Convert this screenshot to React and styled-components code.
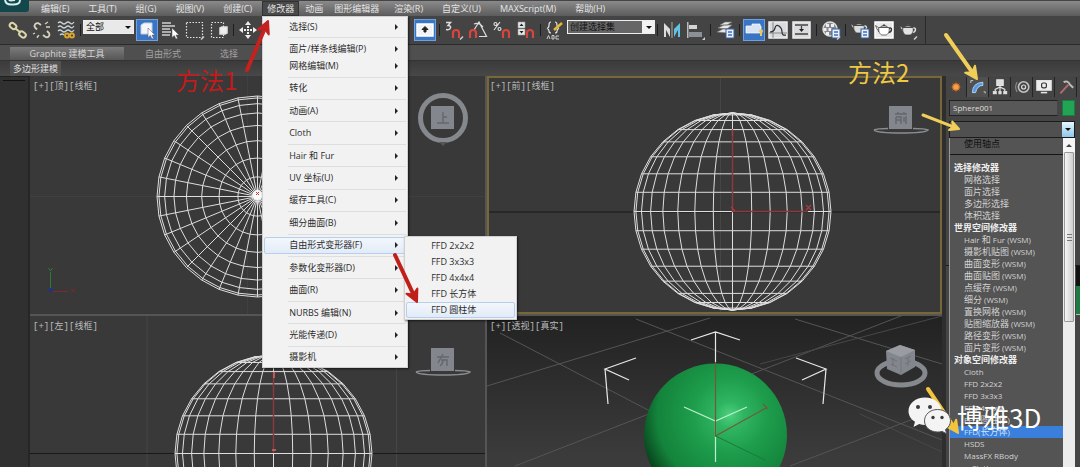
import React from "react";
import styled, { createGlobalStyle, css } from "styled-components";

const Global = createGlobalStyle`
  * { box-sizing: border-box; }
  body { margin: 0; background: #444; overflow: hidden; }
  button, input, select {
    font: inherit; color: inherit; margin: 0; padding: 0; border: 0;
    background: none; border-radius: 0; appearance: none; text-align: left;
  }
  ul { list-style: none; margin: 0; padding: 0; }
`;

const Shell = styled.div`
  position: relative;
  display: flex;
  flex-direction: column;
  height: 100vh;
  overflow: hidden;
  background: #444;
  color: #ddd;
  font: 9px/12px "Open Sans", "Noto Sans CJK SC", sans-serif;
  white-space: nowrap;
`;

/* ---------- menu bar ---------- */

const MenuBar = styled.nav`
  position: relative;
  z-index: 3;
  display: flex;
  flex: none;
  gap: 1px;
  height: 16px;
  padding-left: 32px;
  border-top: 1px solid #444;
  background: linear-gradient(#8a8a8a, #5c5c5c);
`;

const Logo = styled.svg`
  position: absolute;
  left: 0;
  top: -1px;
`;

const MenuSlot = styled.div`
  position: relative;
  display: flex;
`;

const MenuTitle = styled.button`
  height: 15px;
  padding: 0 ${(p) => (p.$tight ? 5 : 9)}px;
  color: #e4e4e4;
  ${(p) =>
    p.$open &&
    css`
      background: #494949;
      box-shadow: inset 0 0 0 1px #333;
    `}
`;

const Popup = styled.div`
  position: absolute;
  display: flex;
  flex-direction: column;
  padding: 1px;
  background: #f2f2f2;
  border: 1px solid #d0d0d0;
  box-shadow: 1px 1px 2px rgba(0, 0, 0, 0.6);
  color: #2c2c2c;
`;

const MainMenu = styled(Popup)`
  left: 0;
  top: 15px;
  width: 146px;
  height: 352px;
`;

const MenuRow = styled.div`
  position: relative;
`;

const MenuItem = styled.button`
  display: flex;
  align-items: center;
  justify-content: space-between;
  width: 100%;
  height: 17px;
  padding: 0 7px 0 24px;
  border: 1px solid transparent;
  border-radius: 2px;
  ${(p) =>
    p.$active &&
    css`
      border-color: #b4d0ee;
      background: linear-gradient(#f3f7fc, #e2ebf7);
    `}
  &::after {
    content: "";
    display: ${(p) => (p.$sub ? "block" : "none")};
    border: 3px solid transparent;
    border-left-color: #222;
    border-right: 0;
  }
`;

const SubMenu = styled(Popup)`
  left: calc(100% - 2px);
  top: -1px;
  width: 113px;
  ${MenuItem} {
    height: 16px;
  }
`;

const Divider = styled.div`
  flex: 1;
  margin-left: 24px;
  background: linear-gradient(#dedede, #dedede) center / 100% 1px no-repeat;
`;

/* ---------- toolbar ---------- */

const Toolbar = styled.div`
  display: flex;
  flex: none;
  align-items: center;
  height: 29px;
  padding-left: 6px;
  background: #444;
  border-bottom: 1px solid #2b2b2b;
`;

const Tool = styled.button`
  display: flex;
  flex: none;
  align-items: center;
  justify-content: center;
  width: 22px;
  height: 22px;
  margin: 0 1px;
  ${(p) =>
    p.$on &&
    css`
      background: #3a74c4;
      box-shadow: inset 0 0 0 1px #6fa0e0;
    `}
`;

const Sep = styled.span`
  flex: none;
  width: 1px;
  height: 12px;
  margin: 0 2px;
  background: #1e1e1e;
`;

const CoveredTools = styled.span`
  flex: none;
  width: 153px;
`;

const ToolbarEnd = styled.span`
  width: 6px;
  height: 28px;
  border-right: 1px solid #2b2b2b;
`;

const Pick = styled.span`
  position: relative;
  align-self: flex-start;
  display: flex;
  flex: none;
  width: ${(p) => p.$w}px;
  margin: 4px ${(p) => p.$after}px 0 0;
  &::after {
    content: "";
    position: absolute;
    right: 3px;
    top: 6px;
    border: 3px solid transparent;
    border-top-color: #111;
    border-bottom: 0;
  }
  select {
    width: 100%;
    height: 14px;
    padding: 0 2px;
    line-height: 12px;
    border: 1px solid #eee;
    outline: 0;
    color: #111;
    background: ${(p) =>
      p.$dim ? "linear-gradient(90deg, #666 74px, #f2f2f2 74px)" : "#e9e9e9"};
  }
`;

/* ---------- ribbon ---------- */

const Ribbon = styled.div`
  display: flex;
  flex: none;
  height: 16px;
  padding: 2px 0 0 10px;
  background: #4f4f4f;
  border-bottom: 1px solid #333;
`;

const RibbonTab = styled.button`
  width: ${(p) => p.$w}px;
  text-align: center;
  color: ${(p) => (p.$on ? "#d5d5d5" : "#a2a2a2")};
  ${(p) => p.$on && "background: linear-gradient(#7b7b7b, #565656);"}
`;

const RibbonPanel = styled.div`
  display: flex;
  flex: none;
  height: 15px;
  padding: 0 0 0 10px;
  background: linear-gradient(#3b3b3b, #484848);
`;

const PanelName = styled.button`
  padding: 0 3px;
  background: #525252;
  color: #ddd;
`;

/* ---------- work area ---------- */

const Work = styled.main`
  display: flex;
  flex: 1;
  min-height: 0;
`;

const LeftStrip = styled.div`
  flex: none;
  width: 30px;
  padding: 3px 3px 0;
  background: #303030;
  border-top: 1px solid #222;
  border-right: 2px solid #262626;
  &::before {
    content: "";
    display: block;
    border-top: 1px solid #111;
  }
`;

const Viewports = styled.div`
  display: grid;
  flex: 1;
  min-width: 0;
  grid-template-columns: 1fr 1fr;
  grid-template-rows: 238px 1fr;
  gap: 2px;
  background: #555;
`;

const Viewport = styled.section`
  position: relative;
  min-width: 0;
  min-height: 0;
  overflow: hidden;
  background: ${(p) =>
    p.$shaded ? "linear-gradient(#222, #3d3d3d)" : "#393939"};
  &::after {
    content: "";
    position: absolute;
    inset: 0;
    pointer-events: none;
    border: ${(p) => (p.$active ? "2px solid #786838" : "0")};
  }
  > svg {
    display: block;
    width: 100%;
    height: 100%;
  }
`;

const Caption = styled.div`
  position: absolute;
  left: 3px;
  top: 5px;
  font: 9px/12px "Liberation Mono", "Noto Sans CJK SC", monospace;
  color: #bcbcbc;
`;

/* ---------- command panel ---------- */

const Panel = styled.aside`
  display: flex;
  flex: none;
  flex-direction: column;
  width: 138px;
  padding: 0 5px 0 3px;
  background:
    linear-gradient(#111 20px, #1f7a41 20px 48px, #bbb 48px) right 190px / 4px 49px no-repeat,
    linear-gradient(#1c1c1c, #1c1c1c) 0 189px / 100% 1px no-repeat,
    #454545;
  border-left: 4px solid #2e2e2e;
`;

const PanelTabs = styled.div`
  display: flex;
  flex: none;
  height: 23px;
  margin-left: -4px;
`;

const PanelTab = styled.button`
  display: flex;
  flex: none;
  align-items: center;
  justify-content: center;
  width: 22px;
  height: 20px;
  margin-top: 1px;
  border-right: 1px solid #242424;
  ${(p) => p.$on && "background: #505050;"}
`;

const NameRow = styled.div`
  display: flex;
  flex: none;
  gap: 4px;
  height: 16px;
  margin-top: 1px;
`;

const NameInput = styled.input`
  flex: 1;
  min-width: 0;
  padding: 0 3px;
  font-size: 8px;
  background: #585858;
  border: 1px solid #222;
  border-right-color: #444;
  color: #ddd;
  outline: 0;
`;

const Swatch = styled.button`
  width: 13px;
  background: #22a455;
  border: 1px solid #1b7a40;
`;

const ModifierPick = styled.button`
  display: flex;
  flex: none;
  justify-content: flex-end;
  height: 17px;
  margin-top: 5px;
  background: #505050;
  border: 1px solid #1c1c1c;
`;

const DropArrow = styled.span`
  display: flex;
  align-items: center;
  justify-content: center;
  width: 12px;
  background: linear-gradient(#e8f6fd, #8cc8ea);
  &::after {
    content: "";
    border: 3px solid transparent;
    border-top-color: #111;
    border-bottom: 0;
  }
`;

const ListBox = styled.div`
  display: flex;
  flex: 1;
  min-height: 0;
  border-left: 1px solid #999;
`;

const List = styled.ul`
  flex: 1;
  min-width: 0;
  overflow: hidden;
  background: #545454;
`;

const Entry = styled.li`
  height: 12px;
  padding-left: 14px;
  color: #d2d2d2;
  ${(p) => p.$kind === "title" && "padding-left: 4px; font-weight: 700; color: #eee;"}
  ${(p) => p.$kind === "dark" && "color: #111;"}
  ${(p) => p.$kind === "on" && "background: #3a7fdc; color: #cfe2fa;"}
  ${(p) =>
    p.$kind === "rule" &&
    "background: linear-gradient(#151515, #151515) 0 4px / 100% 1px no-repeat;"}
`;

const Latin = styled.span`
  font-size: 8px;
  white-space: pre;
`;

const Scroll = styled.div`
  display: flex;
  flex-direction: column;
  width: 12px;
  background: #ececec;
`;

const ScrollUp = styled.button`
  display: flex;
  align-items: center;
  justify-content: center;
  height: 14px;
  background: #f6f6f6;
  &::after {
    content: "";
    border: 3px solid transparent;
    border-bottom-color: #444;
    border-top: 0;
  }
`;

const Thumb = styled.div`
  height: 170px;
  margin: 0 1px;
  border: 1px solid #999;
  border-radius: 1px;
  background:
    repeating-linear-gradient(#777 0 1px, transparent 1px 3px) center / 5px 7px no-repeat,
    linear-gradient(90deg, #f6f6f6, #cfcfcf);
`;

/* ---------- annotations ---------- */

const Marks = styled.div`
  position: absolute;
  z-index: 5;
  top: 0;
  ${(p) => p.$side}: 0;
  width: ${(p) => p.$w}px;
  height: 467px;
  pointer-events: none;
`;

const MarksArt = styled.svg`
  position: absolute;
  inset: 0;
`;

const Note = styled.span`
  position: absolute;
  left: ${(p) => p.$x}px;
  top: ${(p) => p.$y}px;
  font: ${(p) => p.$size}px/28px "Noto Sans CJK SC", sans-serif;
  color: ${(p) => p.$color};
`;

/* ---------- drawings ---------- */

const STEP = Math.PI / 16;

function SideSphere({ cx, cy, r }) {
  const lines = [];
  for (let m = -8; m <= 8; m++) {
    const pts = [];
    for (let k = -8; k <= 8; k++) {
      pts.push([
        cx + r * Math.sin(m * STEP) * Math.cos(k * STEP),
        cy + r * Math.sin(k * STEP),
      ]);
    }
    lines.push(pts);
  }
  for (let k = -7; k <= 7; k++) {
    const w = r * Math.cos(k * STEP);
    const y = cy + r * Math.sin(k * STEP);
    lines.push([[cx - w, y], [cx + w, y]]);
  }
  return <Wire lines={lines} />;
}

function TopSphere({ cx, cy, r }) {
  const lines = [];
  for (let m = 0; m < 32; m++) {
    lines.push([
      [cx, cy],
      [cx + r * Math.cos(m * STEP), cy + r * Math.sin(m * STEP)],
    ]);
  }
  for (let k = 1; k <= 8; k++) {
    const pts = [];
    for (let m = 0; m <= 32; m++) {
      pts.push([
        cx + r * Math.sin(k * STEP) * Math.cos(m * STEP),
        cy + r * Math.sin(k * STEP) * Math.sin(m * STEP),
      ]);
    }
    lines.push(pts);
  }
  return <Wire lines={lines} />;
}

function Wire({ lines }) {
  return (
    <g fill="none" stroke="#dedede" strokeWidth="1">
      {lines.map((pts, i) => (
        <polyline key={i} points={pts.map((p) => p.join(",")).join(" ")} />
      ))}
    </g>
  );
}

function FlatCube({ x, y, glyph, ring }) {
  return (
    <g>
      {ring ? (
        <>
          <circle cx={x + 12} cy={y + 12} r="22.5" fill="none" stroke="#85888d" strokeWidth="5" />
          <path d={`M${x + 8} ${y + 36}h8l-4 4z`} fill="#555" />
        </>
      ) : (
        <path d={`M${x - 15} ${y + 24}q3 3 27 3t27-3q-3-1.500-15-1.500M${x - 15} ${y + 24}q3-1.500 14-1.500`} fill="none" stroke="#8a8d92" strokeWidth="1.400" />
      )}
      <rect x={x} y={y} width="23" height="23" fill="#83868c" />
      <path d={glyph} transform={`translate(${x + 6} ${y + 6})`} fill="none" stroke="#64676d" strokeWidth="1.400" />
    </g>
  );
}

const view = (box) => ({ viewBox: box, preserveAspectRatio: "xMidYMin slice", "aria-hidden": true });

function TopScene() {
  return (
    <svg {...view("30 76 455 238")}>
      <path d="M247.500 76V314M30 196.500H485" stroke="#404040" />
      <TopSphere cx={257.5} cy={196.5} r={100.500} />
      <circle cx="257.500" cy="195" r="5" fill="#fff" opacity=".85" />
      <path d="M256 192l3 3m0-3l-3 3" stroke="#c33" />
      <path d="M50.500 290V272m-2-4l2 3 2-3" stroke="#2c7a35" fill="none" />
      <path d="M51 291.500H68m3-3l4 4m0-4l-4 4" stroke="#7c2b2b" fill="none" />
      <rect x="49" y="288" width="4" height="4" fill="#22357c" />
      <FlatCube x={431} y={106} ring glyph="M6 0V11M0 11H12M6 5H10" />
    </svg>
  );
}

function FrontScene() {
  return (
    <svg {...view("487 76 455 238")}>
      <path d="M720.500 76V314" stroke="#454545" />
      <path d="M487 212H942" stroke="#191919" />
      <SideSphere cx={732.5} cy={211.5} r={98.500} />
      <path d="M732.500 130V211.500H808" stroke="#8d3a3c" fill="none" strokeWidth="1.500" />
      <path d="M732.500 129v7M731 207l4 4M806 210l5-5m-5 0l5 5" stroke="#a83c3e" strokeWidth="1.200" />
      <FlatCube x={889} y={106} glyph="M0 2H12M3 0V2M9 0V2M1 5V12M1 5H6V12M1 8H6M9 5V10M11 4V12" />
    </svg>
  );
}

function LeftScene() {
  return (
    <svg {...view("30 316 455 151")}>
      <path d="M147 316V480M396.500 316V480" stroke="#464646" />
      <path d="M30 453.500H485" stroke="#191919" />
      <SideSphere cx={273.5} cy={453.5} r={98.500} />
      <path d="M273.500 372V453" stroke="#8d3a3c" strokeWidth="1.500" />
      <path d="M274 372v6M272 450h4" stroke="#d06a6a" strokeWidth="1.500" />
      <FlatCube x={431} y={348} glyph="M0 3H12M6 0L1 9M4 6H10V12M6 6Q6 10 3 12" />
    </svg>
  );
}

function ShadedScene() {
  return (
    <svg {...view("487 316 455 151")}>
      <defs>
        <radialGradient id="ball" cx="0.6" cy="0.36" r="0.68">
          <stop offset="0" stopColor="#4fd07e" />
          <stop offset="0.14" stopColor="#2fb562" />
          <stop offset="0.4" stopColor="#1d9c4b" />
          <stop offset="0.75" stopColor="#14833b" />
          <stop offset="1" stopColor="#063717" />
        </radialGradient>
      </defs>
      <g stroke="#555" fill="none">
        <path d="M500 333L700 437M636 319L942 440M795 319L942 364M487 386L710 318M515 466L942 300M790 466L942 408" />
        <path d="M860 414L942 452M760 364L942 316" stroke="#484848" />
      </g>
      <circle cx="715.500" cy="435" r="71.500" fill="url(#ball)" />
      <g stroke="#e8e8e8" fill="none" strokeWidth="1.200">
        <path d="M691 340L715.500 332L740 340M715.500 332V362" />
        <path d="M636 358L605 369L629 380M605 369L608 404" />
        <path d="M796 358L826 369L802 380M826 369L823 404" />
        <path d="M684 407L715.500 421L747 407M715.500 421V462" stroke="#b9efca" />
      </g>
      <path d="M715.500 362V436L766 408m-3-4l5 5" stroke="#735a35" fill="none" strokeWidth="1.200" />
      <path d="M715.500 436L765 460" stroke="#1b7a3c" />
      <ellipse cx="901" cy="373" rx="24" ry="12" fill="none" stroke="#85888d" strokeWidth="5" />
      <path d="M886 351L900 345L915 350V367L901 375L887 369Z" fill="#83868c" />
      <path d="M886 351L900 345L915 350L901 357Z" fill="#999ca1" />
      <path d="M901 357V375" stroke="#74777c" />
      <path d="M890 358l7 3m-6 3l6 3m-4-9v8M905 359l6-3m-6 8l6-3m-3-3v8" stroke="#6f7278" />
    </svg>
  );
}

const Icon = ({ children, size = 20 }) => (
  <svg width={size} height={size} viewBox="0 0 20 20" fill="none" stroke="#e3e3e3" strokeWidth="1.500" aria-hidden="true">
    {children}
  </svg>
);

const Magnet = () => (
  <path d="M10 18V13a3 3 0 0 1 6 0V18" stroke="#d8453e" strokeWidth="2.200" />
);
const Cursor = ({ x = 0, y = 0 }) => (
  <path d="M11 8V17.500L13.300 15.500L15 19L16.500 18.200L15 15H18Z" fill="#fff" stroke="#555" strokeWidth=".5" transform={`translate(${x} ${y})`} />
);
const Corner = () => <path d="M16 19.500L19 16.500" stroke="#ccc" />;
const Teapot = ({ stroke = "#333", fill = "#dcdcdc" }) => (
  <g stroke={stroke} strokeWidth=".7" fill={fill}>
    <path d="M14.500 8.500c4-2 4 3 0 4" fill="none" stroke={fill === "#fff" ? stroke : fill} strokeWidth="1.400" />
    <path d="M5 8L1.500 5.500L2.500 8L5 12Z" />
    <path d="M5 7.500h10c1 4-1 7-3 7.500H8C6 14.500 4 11.500 5 7.500zM6.500 7c2-2 5-2 7 0zM9 5.500a1 1 0 1 1 2 0z" />
  </g>
);
const Sheet = () => (
  <>
    <rect x="11" y="9" width="8" height="9" fill="#e9f0fa" stroke="#3a5f9c" strokeWidth="1" />
    <path d="M13 12h4M13 15h4" stroke="#3a6fc0" />
  </>
);

const icons = {
  link: (
    <g stroke="#dcd7a8" strokeWidth="2">
      <rect x="1.500" y="3.500" width="7" height="5" rx="2.500" transform="rotate(40 5 6)" />
      <rect x="11" y="12" width="7" height="5" rx="2.500" transform="rotate(40 14.500 14.500)" />
      <path d="M7.500 8.500l5 4" />
    </g>
  ),
  unlink: (
    <g stroke="#d5d3bd" strokeWidth="1.800">
      <path d="M9 5L6.500 3.200C4 2.500 1.500 5 3 7.500L5 9.500M11 15l2.500 2c2.500 1 5-1.500 3.500-4L15 11" />
      <path d="M13 4l3-2M14 7h4M3 13l-2 1M7 15l-2 3M5 17l1-1" strokeWidth="1.300" />
    </g>
  ),
  wave: (
    <g>
      <path d="M2 3q2-2 4 0t4 0t4 0t4-1M2 7q2-2 4 0t4 0t4 0t4-1M2 11q2-2 4 0t4 0t4 0t4-1M4 15q2-2 4 0" stroke="#c9d2d6" strokeWidth="1.300" />
      <path d="M9 15.500a2 2 0 1 0 4 0a2 2 0 1 0-4 0M14 15.500a2 2 0 1 0 4 0a2 2 0 1 0-4 0" stroke="#dba62c" strokeWidth="1.800" />
    </g>
  ),
  pick: (
    <g>
      <path d="M4 5L7 3H15V12L12 14H4Z" fill="#f3f6fa" stroke="#c4cfdf" strokeWidth="1" />
      <Cursor />
    </g>
  ),
  byName: (
    <g>
      <path d="M1 3h9M1 6h13M1 9h8M1 12h9M1 15h8" stroke="#cfcfcf" />
      <Cursor />
    </g>
  ),
  region: (
    <g>
      <rect x="1.500" y="2.500" width="16" height="15" strokeDasharray="1.500 1.500" strokeWidth="1.200" />
      <Corner />
    </g>
  ),
  crossing: (
    <g>
      <rect x="2.500" y="2.500" width="12" height="15" strokeDasharray="1.500 1.500" strokeWidth="1.200" />
      <path d="M11 8l2-1h5v6l-2 1h-5z" fill="#eee" />
    </g>
  ),
  move: (
    <g fill="#eee" stroke="none">
      <path d="M10 1l3 4H7zM10 19l3-4H7zM1 10l4-3v6zM19 10l-4-3v6z" />
      <path d="M9 6h2v2H9zM9 12h2v2H9zM6 9h2v2H6zM12 9h2v2h-2zM9 9h2v2H9z" />
    </g>
  ),
  pivot: (
    <g>
      <rect x="2" y="4" width="16" height="12" fill="#f0f2f5" stroke="#fff" />
      <path d="M10 6.500L13 9.500H11V12H9V9.500H7Z" fill="#222" stroke="#222" strokeWidth="1" />
    </g>
  ),
  snap3: (
    <g>
      <path d="M2 2.500h4.500L4 5.500c4 0 3.500 5-2 4" stroke="#ddd" />
      <g transform="translate(-1 0)"><Magnet /></g>
      <Corner />
    </g>
  ),
  angle: (
    <g>
      <path d="M6 10L11 2L18.500 16.500H11M6 4q5-2 9 3" stroke="#ddd" strokeWidth="1.200" />
      <g transform="translate(-8 0)"><Magnet /></g>
    </g>
  ),
  percent: (
    <g>
      <path d="M2 10L8 2M2 4a1.500 1.500 0 1 0 3 0a1.500 1.500 0 1 0-3 0M6 9a1.500 1.500 0 1 0 3 0a1.500 1.500 0 1 0-3 0" stroke="#ddd" strokeWidth="1.200" />
      <g transform="translate(1 0)"><Magnet /></g>
    </g>
  ),
  spinner: (
    <g>
      <path d="M2 2h7v6H2zM2 9h7v6H2z" fill="#e8e8e8" stroke="#999" strokeWidth=".6" />
      <path d="M5.500 3.500L7.500 6h-4zM5.500 13.500L7.500 11h-4z" fill="#222" stroke="none" />
      <g transform="translate(1 0)"><Magnet /></g>
    </g>
  ),
  named: (
    <g>
      <path d="M6 2Q4 2 4 5T2 8.500Q4 9 4 11T6 13M10 2q2 0 2 3t2 3.500Q12 9 12 11t-2 2" strokeWidth="1.200" />
      <path d="M9 10L17 3" stroke="#e4b93b" strokeWidth="2.500" />
      <path d="M2 19l1.500-3.500L5 19M7 19v-3.500h2V19zM14 16h-3v3h3" stroke="#ccc" strokeWidth="1" />
    </g>
  ),
  mirror: (
    <g stroke="none">
      <path d="M2 3v14h2v-7l4 7V9z" fill="#ddd" />
      <path d="M18 3v14h-2v-7l-4 7V9z" fill="#62c3e4" />
      <path d="M9.500 2h1v16h-1z" fill="#aaa" />
    </g>
  ),
  align: (
    <g stroke="none">
      <path d="M1 2h1.500v16H1z" fill="#bbb" />
      <path d="M3 5h8v4H3z" fill="#d2d4d8" />
      <path d="M3 12h13v5H3z" fill="#8b8f96" />
      <path d="M16 20l3-3v3z" fill="#ccc" />
    </g>
  ),
  layers: (
    <g>
      <path d="M2 12l6-3h9l-5 4zM3 8l6-3h8l-5 4zM5 5l5-3h7l-5 3z" fill="#e8e8e8" stroke="#777" strokeWidth=".7" />
      <Sheet />
    </g>
  ),
  ribbon: (
    <g>
      <path d="M2 6h6V4h8v2h1v7H2z" fill="#d8e4f4" stroke="#fff" strokeWidth=".7" />
      <path d="M15 11a2 2 0 1 1 3 2v3h-2v-3z" fill="#e9c75a" stroke="none" />
    </g>
  ),
  curve: (
    <g>
      <rect x="1" y="2" width="18" height="16" fill="#d9dbde" stroke="#eee" />
      <path d="M5 2V18M1 13H19" stroke="#888" strokeWidth="1" />
      <path d="M2 12q4 0 5-4t4-2t3 6t4 3" stroke="#333" strokeWidth="1.200" />
    </g>
  ),
  schematic: (
    <g>
      <rect x="1" y="2" width="17" height="16" fill="#d9dbde" stroke="#eee" />
      <path d="M3 5h13M3 14h13M9.500 6v4" stroke="#444" strokeWidth="1.300" />
      <path d="M7 9h5l-2.500 3z" fill="#222" stroke="none" />
    </g>
  ),
  material: (
    <g>
      <circle cx="9" cy="9" r="7" fill="#888" stroke="#ddd" />
      <path d="M5 4h3v3H5zM10 4h3v3h-3zM2.500 8h3v3h-3zM7.500 8h3v3h-3zM5 12h3v3H5z" fill="#eee" stroke="none" />
      <Sheet />
      <Corner />
    </g>
  ),
  renderSetup: (<g><g transform="translate(-1 -2)"><Teapot /></g><Sheet /></g>),
  frame: (
    <g>
      <rect x="1" y="2" width="18" height="16" fill="#e9e9e9" stroke="#fff" />
      <Teapot fill="#fff" />
    </g>
  ),
  render: (<g><Teapot fill="#e2e2e2" /><Corner /></g>),
};

const ToolBtn = ({ name, label, on }) => (
  <Tool type="button" aria-label={label} $on={on}>
    <Icon>{icons[name]}</Icon>
  </Tool>
);

const panelTabs = [
  ["创建", <><path d="M10 3v14M3 10h14M5 5l10 10M15 5L5 15" stroke="#8a5327" strokeWidth="1" /><circle cx="10" cy="10" r="4" fill="#f0a24a" stroke="#d8762a" /></>],
  ["修改", <><path d="M3 17Q3 5 16 4v4Q9 8 7 17z" fill="#4f9be6" stroke="#cfe5fb" strokeWidth="1" /><path d="M1 2h3M1 2v3M17 16h2v2" strokeWidth="1" /></>],
  ["层次", <><path d="M6 1h8v7H6z" fill="#ddd" /><path d="M10 8v8M10 10L4 13v3M10 10l6 3v3" /><path d="M1 15h5v4H1zM8 15h4v4H8zM14 15h5v4h-5z" fill="#ddd" stroke="none" /></>],
  ["运动", <><circle cx="12" cy="10" r="6.500" stroke="#c4c4c4" strokeWidth="2" /><circle cx="12" cy="10" r="2.500" stroke="#ddd" /><path d="M4 4Q0 10 4 16" stroke="#888" /></>],
  ["显示", <><rect x="1" y="2" width="18" height="12" fill="#eee" /><rect x="7" y="5" width="6" height="6" rx="2" stroke="#333" /><path d="M6 17h8" strokeWidth="2" /></>],
  ["实用程序", <><path d="M3 18L13 7" stroke="#b06b6b" strokeWidth="2.500" /><path d="M7 4q5-3 8 3l4 4" stroke="#bbb" strokeWidth="2.500" /></>],
];

/* ---------- data ---------- */

const menuGroups = [
  ["选择(S)"],
  ["面片/样条线编辑(P)", "网格编辑(M)"],
  ["转化"],
  ["动画(A)"],
  ["Cloth"],
  ["Hair 和 Fur"],
  ["UV 坐标(U)"],
  ["缓存工具(C)"],
  ["细分曲面(B)"],
  ["自由形式变形器(F)"],
  ["参数化变形器(D)"],
  ["曲面(R)"],
  ["NURBS 编辑(N)"],
  ["光能传递(D)"],
  ["摄影机"],
];
const ffd = ["FFD 2x2x2", "FFD 3x3x3", "FFD 4x4x4", "FFD 长方体", "FFD 圆柱体"];

const modifiers = [
  ["使用轴点", "dark"],
  ["", "rule"],
  ["选择修改器", "title"],
  ["网格选择"],
  ["面片选择"],
  ["多边形选择"],
  ["体积选择"],
  ["世界空间修改器", "title"],
  ["Hair 和 Fur (WSM)"],
  ["摄影机贴图 (WSM)"],
  ["曲面变形 (WSM)"],
  ["曲面贴图 (WSM)"],
  ["点缓存 (WSM)"],
  ["细分 (WSM)"],
  ["置换网格 (WSM)"],
  ["贴图缩放器 (WSM)"],
  ["路径变形 (WSM)"],
  ["面片变形 (WSM)"],
  ["对象空间修改器", "title"],
  ["Cloth"],
  ["FFD 2x2x2"],
  ["FFD 3x3x3"],
  ["FFD 4x4x4"],
  ["FFD(圆柱体)"],
  ["FFD(长方体)", "on"],
  ["HSDS"],
  ["MassFX RBody"],
  ["mCloth"],
];

/* Latin runs are set a size smaller than the Chinese around them. */
const mixed = (text) =>
  text
    .split(/([ -~]+)/)
    .filter(Boolean)
    .map((part, i) => (/^[ -~]/.test(part) ? <Latin key={i}>{part}</Latin> : part));

function ModifierMenu() {
  return (
    <MainMenu>
      {menuGroups.map((group, i) => (
        <React.Fragment key={i}>
          {i > 0 && <Divider />}
          {group.map((label) => {
            const open = label.startsWith("自由形式");
            return (
              <MenuRow key={label}>
                <MenuItem type="button" $sub $active={open}>{label}</MenuItem>
                {open && (
                  <SubMenu>
                    {ffd.map((f, n) => (
                      <MenuItem type="button" key={f} $active={n === 4}>{f}</MenuItem>
                    ))}
                  </SubMenu>
                )}
              </MenuRow>
            );
          })}
        </React.Fragment>
      ))}
    </MainMenu>
  );
}

/* An arrow whose head lies at (x2, y2). */
function Arrow({ x1, y1, x2, y2, color, width = 4, head = 12 }) {
  const len = Math.hypot(x2 - x1, y2 - y1);
  const turn = (Math.atan2(y2 - y1, x2 - x1) * 180) / Math.PI;
  return (
    <g transform={`translate(${x1} ${y1}) rotate(${turn})`} fill={color} stroke={color} strokeLinejoin="round">
      <path d={`M0 0H${len - head / 2}`} strokeWidth={width} strokeLinecap="round" />
      <path d={`M${len} 0L${len - head} ${-head / 2}L${len - head * 0.7} 0L${len - head} ${head / 2}Z`} strokeWidth="2" />
    </g>
  );
}

const before = ["编辑(E)", "工具(T)", "组(G)", "视图(V)", "创建(C)"];
const after = ["动画", "图形编辑器", "渲染(R)", "自定义(U)", "MAXScript(M)", "帮助(H)"];

export default function App() {
  return (
    <Shell>
      <Global />
      <MenuBar>
        <Logo width="29" height="13" viewBox="0 0 29 13" aria-hidden="true">
          <path d="M0 0H29V9Q29 12 26 12H0Z" fill="#12474c" />
          <path d="M5 0Q6 5 12 4.500Q20 5 20 0M9 0Q10 1 15 0" fill="none" stroke="#d6eeee" strokeWidth="2" />
        </Logo>
        {before.map((t) => <MenuTitle type="button" key={t}>{t}</MenuTitle>)}
        <MenuSlot>
          <MenuTitle type="button" $open $tight>修改器</MenuTitle>
          <ModifierMenu />
        </MenuSlot>
        {after.map((t, i) => <MenuTitle type="button" key={t} $tight={i < 2}>{t}</MenuTitle>)}
      </MenuBar>

      <Toolbar>
        <ToolBtn name="link" label="选择并链接" />
        <ToolBtn name="unlink" label="断开链接" />
        <ToolBtn name="wave" label="绑定到空间扭曲" />
        <Sep />
        <Pick $w={51} $after={1}>
          <select aria-label="选择过滤器"><option>全部</option></select>
        </Pick>
        <ToolBtn name="pick" label="选择对象" on />
        <ToolBtn name="byName" label="按名称选择" />
        <ToolBtn name="region" label="选择区域" />
        <ToolBtn name="crossing" label="窗口/交叉" />
        <Sep />
        <ToolBtn name="move" label="选择并移动" />
        <CoveredTools />
        <ToolBtn name="pivot" label="使用中心" on />
        <Sep />
        <ToolBtn name="snap3" label="捕捉开关" />
        <ToolBtn name="angle" label="角度捕捉" />
        <ToolBtn name="percent" label="百分比捕捉" />
        <ToolBtn name="spinner" label="微调器捕捉" />
        <Sep />
        <ToolBtn name="named" label="编辑命名选择集" />
        <Pick $w={88} $after={0} $dim>
          <select aria-label="命名选择集"><option>创建选择集</option></select>
        </Pick>
        <Sep />
        <ToolBtn name="mirror" label="镜像" />
        <ToolBtn name="align" label="对齐" />
        <Sep />
        <ToolBtn name="layers" label="层管理器" />
        <Sep />
        <ToolBtn name="ribbon" label="切换功能区" on />
        <ToolBtn name="curve" label="曲线编辑器" />
        <ToolBtn name="schematic" label="图解视图" />
        <Sep />
        <ToolBtn name="material" label="材质编辑器" />
        <Sep />
        <ToolBtn name="renderSetup" label="渲染设置" />
        <ToolBtn name="frame" label="渲染帧窗口" />
        <ToolBtn name="render" label="渲染产品" />
        <ToolbarEnd />
      </Toolbar>

      <Ribbon>
        <RibbonTab type="button" $w={114} $on>Graphite 建模工具</RibbonTab>
        <RibbonTab type="button" $w={78}>自由形式</RibbonTab>
        <RibbonTab type="button" $w={54}>选择</RibbonTab>
      </Ribbon>
      <RibbonPanel>
        <PanelName type="button">多边形建模</PanelName>
      </RibbonPanel>

      <Work>
        <LeftStrip />
        <Viewports>
          <Viewport><TopScene /><Caption>[+][顶][线框]</Caption></Viewport>
          <Viewport $active><FrontScene /><Caption>[+][前][线框]</Caption></Viewport>
          <Viewport><LeftScene /><Caption>[+][左][线框]</Caption></Viewport>
          <Viewport $shaded><ShadedScene /><Caption>[+][透视][真实]</Caption></Viewport>
        </Viewports>
        <Panel>
          <PanelTabs>
            {panelTabs.map(([label, art], i) => (
              <PanelTab type="button" key={label} aria-label={label} $on={i === 1}>
                <Icon size={16}>{art}</Icon>
              </PanelTab>
            ))}
          </PanelTabs>
          <NameRow>
            <NameInput aria-label="对象名称" defaultValue="Sphere001" />
            <Swatch type="button" aria-label="对象颜色" />
          </NameRow>
          <ModifierPick type="button" aria-label="修改器列表"><DropArrow /></ModifierPick>
          <ListBox>
            <List role="listbox" aria-label="修改器">
              {modifiers.map(([label, kind], i) => (
                <Entry key={i} role="option" $kind={kind}>{mixed(label)}</Entry>
              ))}
            </List>
            <Scroll>
              <ScrollUp type="button" aria-label="向上滚动" />
              <Thumb />
            </Scroll>
          </ListBox>
        </Panel>
      </Work>

      <Marks $side="left" $w={480}>
        <MarksArt width="480" height="467" viewBox="0 0 480 467" aria-hidden="true">
          <Arrow x1={247} y1={70} x2={268} y2={21} color="#c5221f" />
          <Arrow x1={395} y1={255} x2={417} y2={302} color="#c01f1a" />
        </MarksArt>
        <Note $x={176} $y={66} $size={24} $color="#c01c1c">方法1</Note>
      </Marks>
      <Marks $side="right" $w={260}>
        <MarksArt width="260" height="467" viewBox="820 0 260 467" aria-hidden="true">
          <Arrow x1={946} y1={35} x2={977} y2={79} color="#efcf5a" />
          <Arrow x1={923} y1={115} x2={959} y2={129} color="#efcf5a" width={3} head={9} />
          <Arrow x1={928} y1={389} x2={958} y2={433} color="#f2c53d" />
          <g fill="#f4f4f4">
            <path d="M925 397.500c9.500 0 16.500 6 16.500 13.800S934.500 425 925 425c-2 0-4-.3-5.800-.9L913.500 427l1.500-5.200c-4-2.500-6.500-6.300-6.500-10.500C908.500 403.500 915.500 397.500 925 397.500z" />
            <path d="M937.500 409.500c7.500 0 13 5 13 11.300 0 3.500-2 6.700-5 8.800l1.200 4.200-4.600-2.400c-1.500.4-3 .6-4.600.6-7.500 0-13-5-13-11.200s5.500-11.300 13-11.300z" stroke="#555" />
          </g>
          <g fill="#3a3a3a">
            <circle cx="918" cy="407" r="2" /><circle cx="930" cy="407" r="2" />
            <circle cx="933" cy="417.500" r="1.700" /><circle cx="942" cy="417.500" r="1.700" />
          </g>
        </MarksArt>
        <Note $x={28} $y={58} $size={24} $color="#efc844">方法2</Note>
        <Note $x={137} $y={403} $size={26} $color="#fff">博雅3D</Note>
      </Marks>
    </Shell>
  );
}
